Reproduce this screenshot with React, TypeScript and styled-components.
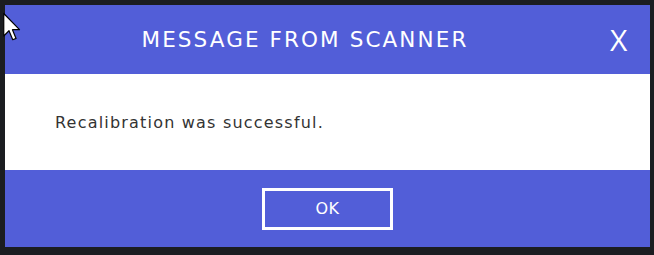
import { createGlobalStyle } from 'styled-components';
import styled from 'styled-components';

const GlobalStyle = createGlobalStyle`
	html, body {
		margin: 0;
		padding: 0;
		background: #1b1d21;
	}
	body {
		font-family: 'DejaVu Sans', 'Open Sans', sans-serif;
	}
`;

const Screen = styled.div`
	position: relative;
	width: 654px;
	height: 255px;
	padding: 5px 4px 0 5px;
	box-sizing: border-box;
	background: #1b1d21;
	overflow: hidden;
`;

const Dialog = styled.div`
	width: 645px;
	display: flex;
	flex-direction: column;
	background: #ffffff;
`;

const Header = styled.div`
	height: 69px;
	display: flex;
	align-items: center;
	background: #525ed8;
	color: #ffffff;
`;

const Title = styled.h1`
	flex: 1;
	margin: 0;
	text-align: center;
	font-family: 'DejaVu Sans', 'Open Sans', sans-serif;
	font-size: 21.5px;
	font-weight: 400;
	letter-spacing: 2.1px;
`;

const Close = styled.button`
	width: 45px;
	height: 100%;
	padding: 0 0 0 5px;
	border: none;
	background: transparent;
	color: #ffffff;
	font-family: 'Open Sans', 'Liberation Sans', sans-serif;
	font-size: 30px;
	font-weight: 400;
	text-align: left;
	cursor: pointer;
`;

const Body = styled.div`
	height: 96px;
	display: flex;
	align-items: center;
	padding-left: 50px;
	color: #333333;
	font-family: 'DejaVu Sans', 'Open Sans', sans-serif;
	font-size: 16px;
	letter-spacing: 1.2px;
`;

const Footer = styled.div`
	height: 77px;
	display: flex;
	align-items: center;
	justify-content: center;
	background: #525ed8;
`;

const OkButton = styled.button`
	width: 131px;
	height: 42px;
	border: 3px solid #ffffff;
	background: transparent;
	color: #ffffff;
	font-family: 'DejaVu Sans', 'Open Sans', sans-serif;
	font-size: 16px;
	letter-spacing: 0.5px;
	cursor: pointer;
`;

const Pointer = styled.svg`
	position: absolute;
	left: 2px;
	top: 12px;
`;

export default function App() {
	return (
		<>
			<GlobalStyle />
			<Screen>
				<Dialog>
					<Header>
						<Title>MESSAGE FROM SCANNER</Title>
						<Close>X</Close>
					</Header>
					<Body>Recalibration was successful.</Body>
					<Footer>
						<OkButton>OK</OkButton>
					</Footer>
				</Dialog>
				<Pointer width="20" height="30" viewBox="0 0 13 20">
					<path
						d="M1 1 L1 16 L4.5 12.5 L7 18.5 L9.2 17.6 L6.8 11.8 L11.5 11.8 Z"
						fill="#ffffff"
						stroke="#000000"
						strokeWidth="0.8"
						strokeLinejoin="round"
					/>
				</Pointer>
			</Screen>
		</>
	);
}
